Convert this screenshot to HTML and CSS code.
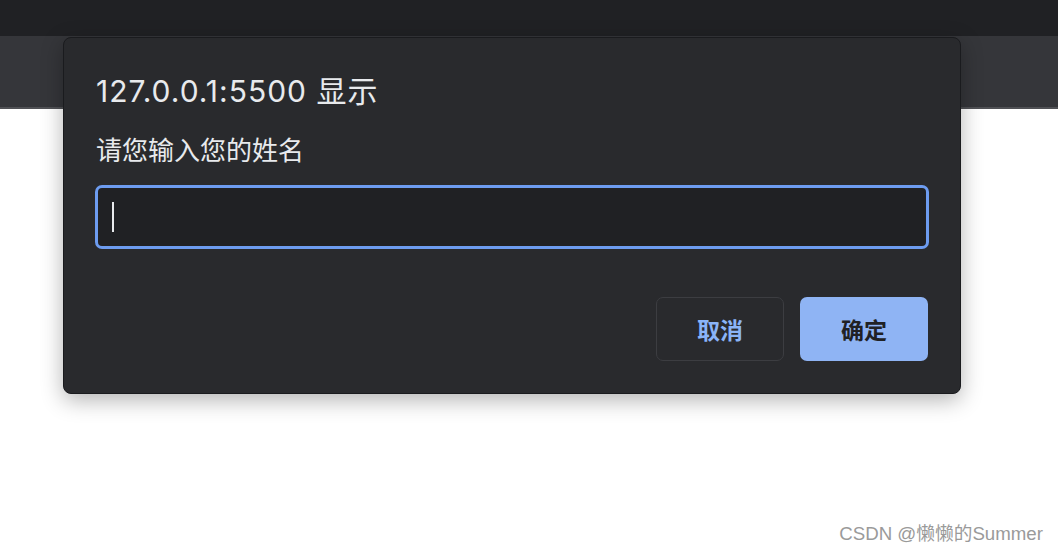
FILE: index.html
```html
<!DOCTYPE html>
<html lang="zh-CN">
<head>
<meta charset="utf-8">
<title>prompt</title>
<link rel="stylesheet" href="styles.css">
</head>
<body>
  <div class="tabstrip"></div>
  <div class="toolbar"></div>
  <main class="page"></main>

  <div class="dialog" role="dialog">
    <div class="dialog-title">127.0.0.1:5500 显示</div>
    <div class="dialog-message">请您输入您的姓名</div>
    <div class="dialog-input"><span class="caret"></span></div>
    <div class="dialog-actions">
      <button class="btn btn-cancel">取消</button>
      <button class="btn btn-ok">确定</button>
    </div>
  </div>

  <div class="watermark">CSDN @懒懒的Summer</div>
</body>
</html>
```

FILE: styles.css
```css
html, body {
  margin: 0;
  padding: 0;
  background: #ffffff;
  width: 1058px;
  height: 552px;
  overflow: hidden;
  font-family: "Inter", "Noto Sans CJK SC", sans-serif;
}

.tabstrip {
  height: 36px;
  background: #202124;
}

.toolbar {
  height: 71px;
  background: #35363a;
  border-bottom: 2px solid #505155;
}

.page {
  height: 443px;
  background: #ffffff;
}

.dialog {
  position: absolute;
  left: 63px;
  top: 37px;
  width: 898px;
  height: 357px;
  box-sizing: border-box;
  padding: 35px 32px 32px 32px;
  background: #292a2d;
  border: 1px solid #1a1b1e;
  border-radius: 8px;
  box-shadow: 0 6px 22px rgba(0, 0, 0, 0.30);
  display: flex;
  flex-direction: column;
  color: #e8eaed;
}

.dialog-title {
  font-size: 30px;
  line-height: 36px;
  font-weight: 400;
  letter-spacing: 1px;
}

.dialog-message {
  margin-top: 26px;
  font-size: 26px;
  line-height: 32px;
}

.dialog-input {
  margin-top: 18px;
  height: 66px;
  box-sizing: border-box;
  border: 3px solid #6d9cf0;
  border-radius: 7px;
  background: #202124;
  display: flex;
  align-items: center;
  padding-left: 14px;
  margin-right: -1px;
  margin-left: -1px;
}

.caret {
  width: 2px;
  height: 30px;
  background: #e8eaed;
}

.dialog-actions {
  margin-top: 48px;
  display: flex;
  justify-content: flex-end;
  gap: 16px;
}

.btn {
  width: 128px;
  height: 64px;
  box-sizing: border-box;
  border-radius: 7px;
  font-family: "Noto Sans CJK SC", sans-serif;
  font-size: 23px;
  font-weight: 700;
  cursor: pointer;
  padding: 0;
}

.btn-cancel {
  background: #292a2d;
  border: 1px solid #3c3d41;
  color: #8ab4f8;
}

.btn-ok {
  background: #8fb4f4;
  border: none;
  color: #202124;
}

.watermark {
  position: absolute;
  right: 15px;
  bottom: 7px;
  font-family: "Liberation Sans", "Noto Sans CJK SC", sans-serif;
  font-size: 18.7px;
  color: #9a9a9a;
  text-shadow: 0 0 2px #ffffff;
}
```
